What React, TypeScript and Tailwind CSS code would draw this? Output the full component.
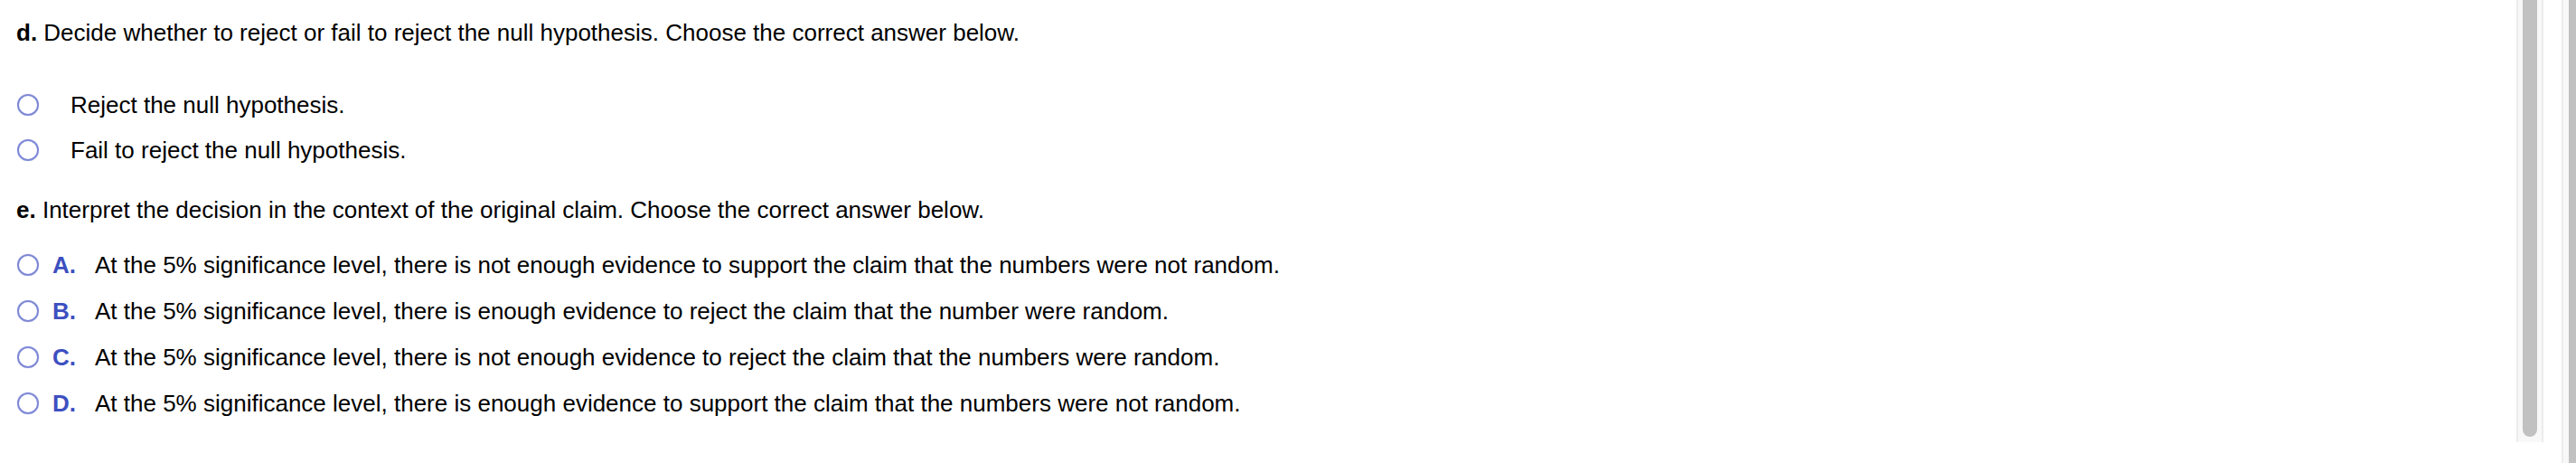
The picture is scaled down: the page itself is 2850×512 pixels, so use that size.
import React from 'react'

const dOptions = ['Reject the null hypothesis.', 'Fail to reject the null hypothesis.']

const eOptions = [
  { key: 'A.', text: 'At the 5% significance level, there is not enough evidence to support the claim that the numbers were not random.' },
  { key: 'B.', text: 'At the 5% significance level, there is enough evidence to reject the claim that the number were random.' },
  { key: 'C.', text: 'At the 5% significance level, there is not enough evidence to reject the claim that the numbers were random.' },
  { key: 'D.', text: 'At the 5% significance level, there is enough evidence to support the claim that the numbers were not random.' },
]

function Radio() {
  return (
    <span className="ml-[1px] inline-block h-[24px] w-[24px] shrink-0 rounded-full border-[2.5px] border-[#7d88d6] shadow-[0_0_1px_#9aa3e0]" />
  )
}

export default function App() {
  return (
    <div className="flex h-[512px] w-[2850px] bg-white font-['Liberation_Sans',Arial,sans-serif] text-[26px] leading-[30px] text-black">
      <div className="flex-1 pl-[18px] pt-[21px]">
        {/* part d */}
        <p>
          <span className="font-bold">d.</span> Decide whether to reject or fail to reject the null hypothesis. Choose the correct answer below.
        </p>
        <div className="mt-[40px]">
          {dOptions.map((opt) => (
            <div key={opt} className="flex h-[50px] items-center">
              <Radio />
              <span className="ml-[35px]">{opt}</span>
            </div>
          ))}
        </div>

        {/* part e */}
        <p className="mt-[26px]">
          <span className="font-bold">e.</span> Interpret the decision in the context of the original claim. Choose the correct answer below.
        </p>
        <div className="mt-[20px]">
          {eOptions.map((opt) => (
            <div key={opt.key} className="flex h-[51px] items-center">
              <Radio />
              <span className="ml-[15px] w-[47px] shrink-0 font-bold text-[#3d4fc1]">{opt.key}</span>
              <span>{opt.text}</span>
            </div>
          ))}
        </div>
      </div>

      {/* inner scrollbar */}
      <div className="flex h-[489px] w-[30px] border-x-2 border-[#ececec] bg-[#f8f8f8] px-[5px]">
        <div className="h-[483px] w-[16px] rounded-b-[8px] bg-[#c1c1c1]" />
      </div>
      <div className="w-[20px]" />
      {/* page scrollbar */}
      <div className="flex h-full w-[16px] border-l-2 border-[#ececec] bg-[#f8f8f8] pl-[6px]">
        <div className="h-full w-[8px] bg-[#c1c1c1]" />
      </div>
    </div>
  )
}
